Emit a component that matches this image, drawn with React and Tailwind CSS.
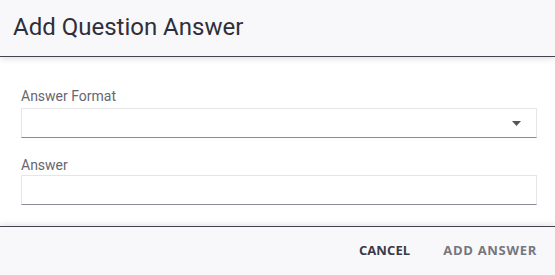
import React from "react";

export default function App() {
  return (
    <div className="w-[555px] h-[275px] bg-white flex flex-col overflow-hidden font-['Roboto',sans-serif]">
      <div className="h-[57px] shrink-0 bg-[#f8f8fa] border-b border-[#44444f] shadow-[0_2px_6px_rgba(0,0,0,0.12)] relative z-10 flex items-center px-[13px]">
        <h1 className="text-[24px] leading-none text-[#2f2f3a] pb-[2px]">Add Question Answer</h1>
      </div>

      <div className="flex-1 pl-[21px] pr-[18px] pt-[30px]">
        <label className="block text-[14px] leading-[20px] text-[#666670] mb-[2px] -mt-[1px]">Answer Format</label>
        <div className="h-[30px] mt-[1px] border border-[#e6e6e9] border-b-[#8b8b95] flex items-center justify-end pr-[15px]">
          <svg width="9" height="5" viewBox="0 0 9 5">
            <path d="M0 0h9L4.5 5z" fill="#555560" />
          </svg>
        </div>

        <label className="block text-[14px] leading-[20px] text-[#666670] mt-[17px]">Answer</label>
        <div className="h-[30px] border border-[#e6e6e9] border-b-[#8b8b95]" />
      </div>

      <div className="h-[49px] shrink-0 bg-[#f8f8fa] border-t border-[#44444f] shadow-[0_-2px_6px_rgba(0,0,0,0.10)] relative z-10 flex items-center justify-end pr-[19px] gap-[33px] font-['Open_Sans',sans-serif] text-[13px] font-bold">
        <button className="text-[#3a3a46] tracking-[0.1px]">CANCEL</button>
        <button className="text-[#76767f] tracking-[0.7px] -mr-[1px]">ADD ANSWER</button>
      </div>
    </div>
  );
}
